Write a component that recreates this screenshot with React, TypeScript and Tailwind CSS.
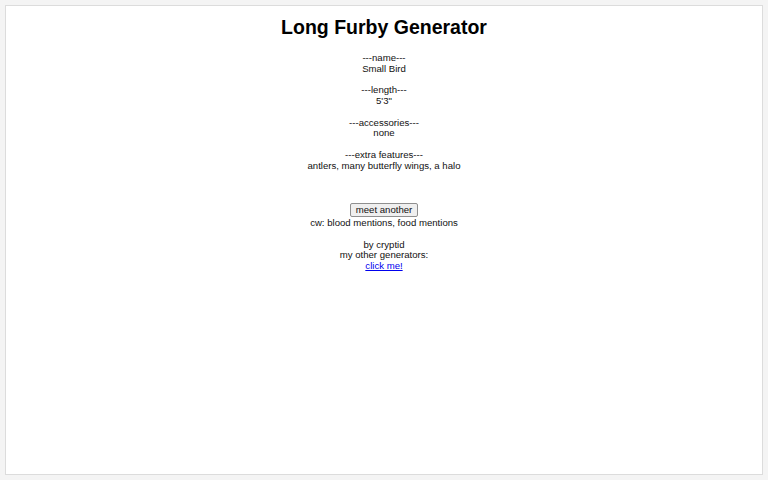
import React from 'react';

interface Trait {
  label: string;
  value: string;
}

const traits: Trait[] = [
  { label: 'name', value: 'Small Bird' },
  { label: 'length', value: '5\'3"' },
  { label: 'accessories', value: 'none' },
  { label: 'extra features', value: 'antlers, many butterfly wings, a halo' },
];

const App = () => {
  return (
    <div className="min-h-[480px] bg-[#f4f4f4] p-[5px] font-['Liberation_Sans',Arial,sans-serif] text-black">
      <div className="h-[470px] bg-white border border-[#dcdcdc] flex flex-col items-center text-center">
        <h1 className="mt-[10px] text-[19.5px] leading-[23px] font-bold">Long Furby Generator</h1>

        <div className="mt-[14px] text-[9.6px] leading-[10.75px] text-[#111]">
          {traits.map((t) => (
            <div key={t.label} className="mb-[10.75px]">
              <div>---{t.label}---</div>
              <div>{t.value}</div>
            </div>
          ))}
        </div>

        <div className="mt-[21px] flex flex-col items-center text-[9.6px] leading-[10.75px] text-[#111]">
          <button className="px-[5px] h-[14px] leading-[12px] text-[9.6px] bg-[#efefef] border border-[#8f8f8f] rounded-[2px]">
            meet another
          </button>
          <div className="mt-[1px]">cw: blood mentions, food mentions</div>
          <div className="h-[10.75px]" />
          <div>by cryptid</div>
          <div>my other generators:</div>
          <a href="#" className="text-[#0000ee] underline">click me!</a>
        </div>
      </div>
    </div>
  );
};

export default App;
